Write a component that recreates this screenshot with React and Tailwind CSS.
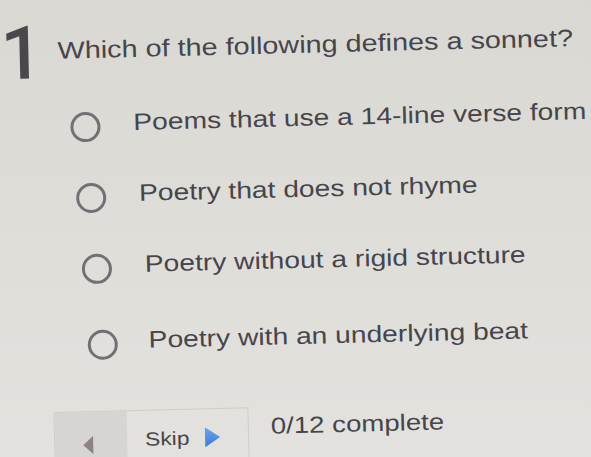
export default function App() {
  const options = [
    { text: "Poems that use a 14-line verse form", ml: "ml-[73px]", gap: "gap-[33px]", mt: "mt-[21px]" },
    { text: "Poetry that does not rhyme", ml: "ml-[77px]", gap: "gap-[33px]", mt: "mt-[35px]" },
    { text: "Poetry without a rigid structure", ml: "ml-[81px]", gap: "gap-[33px]", mt: "mt-[35px]" },
    { text: "Poetry with an underlying beat", ml: "ml-[85px]", gap: "gap-[31px]", mt: "mt-[40px]" },
  ];
  return (
    <div
      className="w-[591px] h-[457px] overflow-hidden bg-gradient-to-b from-[#d9d8d3] to-[#e3e2de] text-[#47454b]"
      style={{ fontFamily: '"Liberation Sans", Arial, sans-serif' }}
    >
      <div className="w-[591px] h-[457px] -rotate-[1.4deg] flex flex-col">
        <div className="flex items-start pt-[9px]">
          <div
            className="w-[62px] h-[71px] pl-[5px] pt-[5px] text-[74px] font-medium leading-[66px] text-[#4a484d]"
            style={{ fontFamily: 'Roboto, "Liberation Sans", sans-serif' }}
          >
            1
          </div>
          <div className="pt-[24px] text-[24px] leading-none whitespace-nowrap origin-left scale-x-120">
            Which of the following defines a sonnet?
          </div>
        </div>
        {options.map((o) => (
          <div key={o.text} className={`flex items-center ${o.ml} ${o.gap} ${o.mt}`}>
            <div className="w-[30px] h-[30px] rounded-full border-[3px] border-[#727075] mt-[6px] shrink-0" />
            <div className="text-[23.5px] leading-none whitespace-nowrap origin-left scale-x-120">{o.text}</div>
          </div>
        ))}
        <div className="flex items-start mt-[51px] ml-[49px]">
          <div className="flex w-[195px] h-[60px] border border-[#cecdc9] rounded-tl-[3px] bg-[#e2e1dd]">
            <div className="w-[72px] bg-[#d6d5d1] flex items-start justify-center pt-[24px] pr-[6px]">
              <svg width="12" height="18" viewBox="0 0 12 18">
                <polygon points="11,0 11,18 1,9" fill="#8c8284" />
              </svg>
            </div>
            <div className="flex items-start pt-[19px] pl-[18px]">
              <span className="text-[19px] leading-none origin-left scale-x-120">Skip</span>
              <svg width="18" height="20" viewBox="0 0 18 20" className="ml-[21px] mt-[-1px]">
                <defs>
                  <linearGradient id="bt" x1="0" y1="0" x2="0" y2="1">
                    <stop offset="0" stopColor="#6aa6ee" />
                    <stop offset="1" stopColor="#3a7ad6" />
                  </linearGradient>
                </defs>
                <polygon points="2,0 17,10 2,20" fill="url(#bt)" />
              </svg>
            </div>
          </div>
          <div className="ml-[22px] mt-[8px] text-[23px] leading-none whitespace-nowrap origin-left scale-x-120">
            0/12 complete
          </div>
        </div>
      </div>
    </div>
  );
}
